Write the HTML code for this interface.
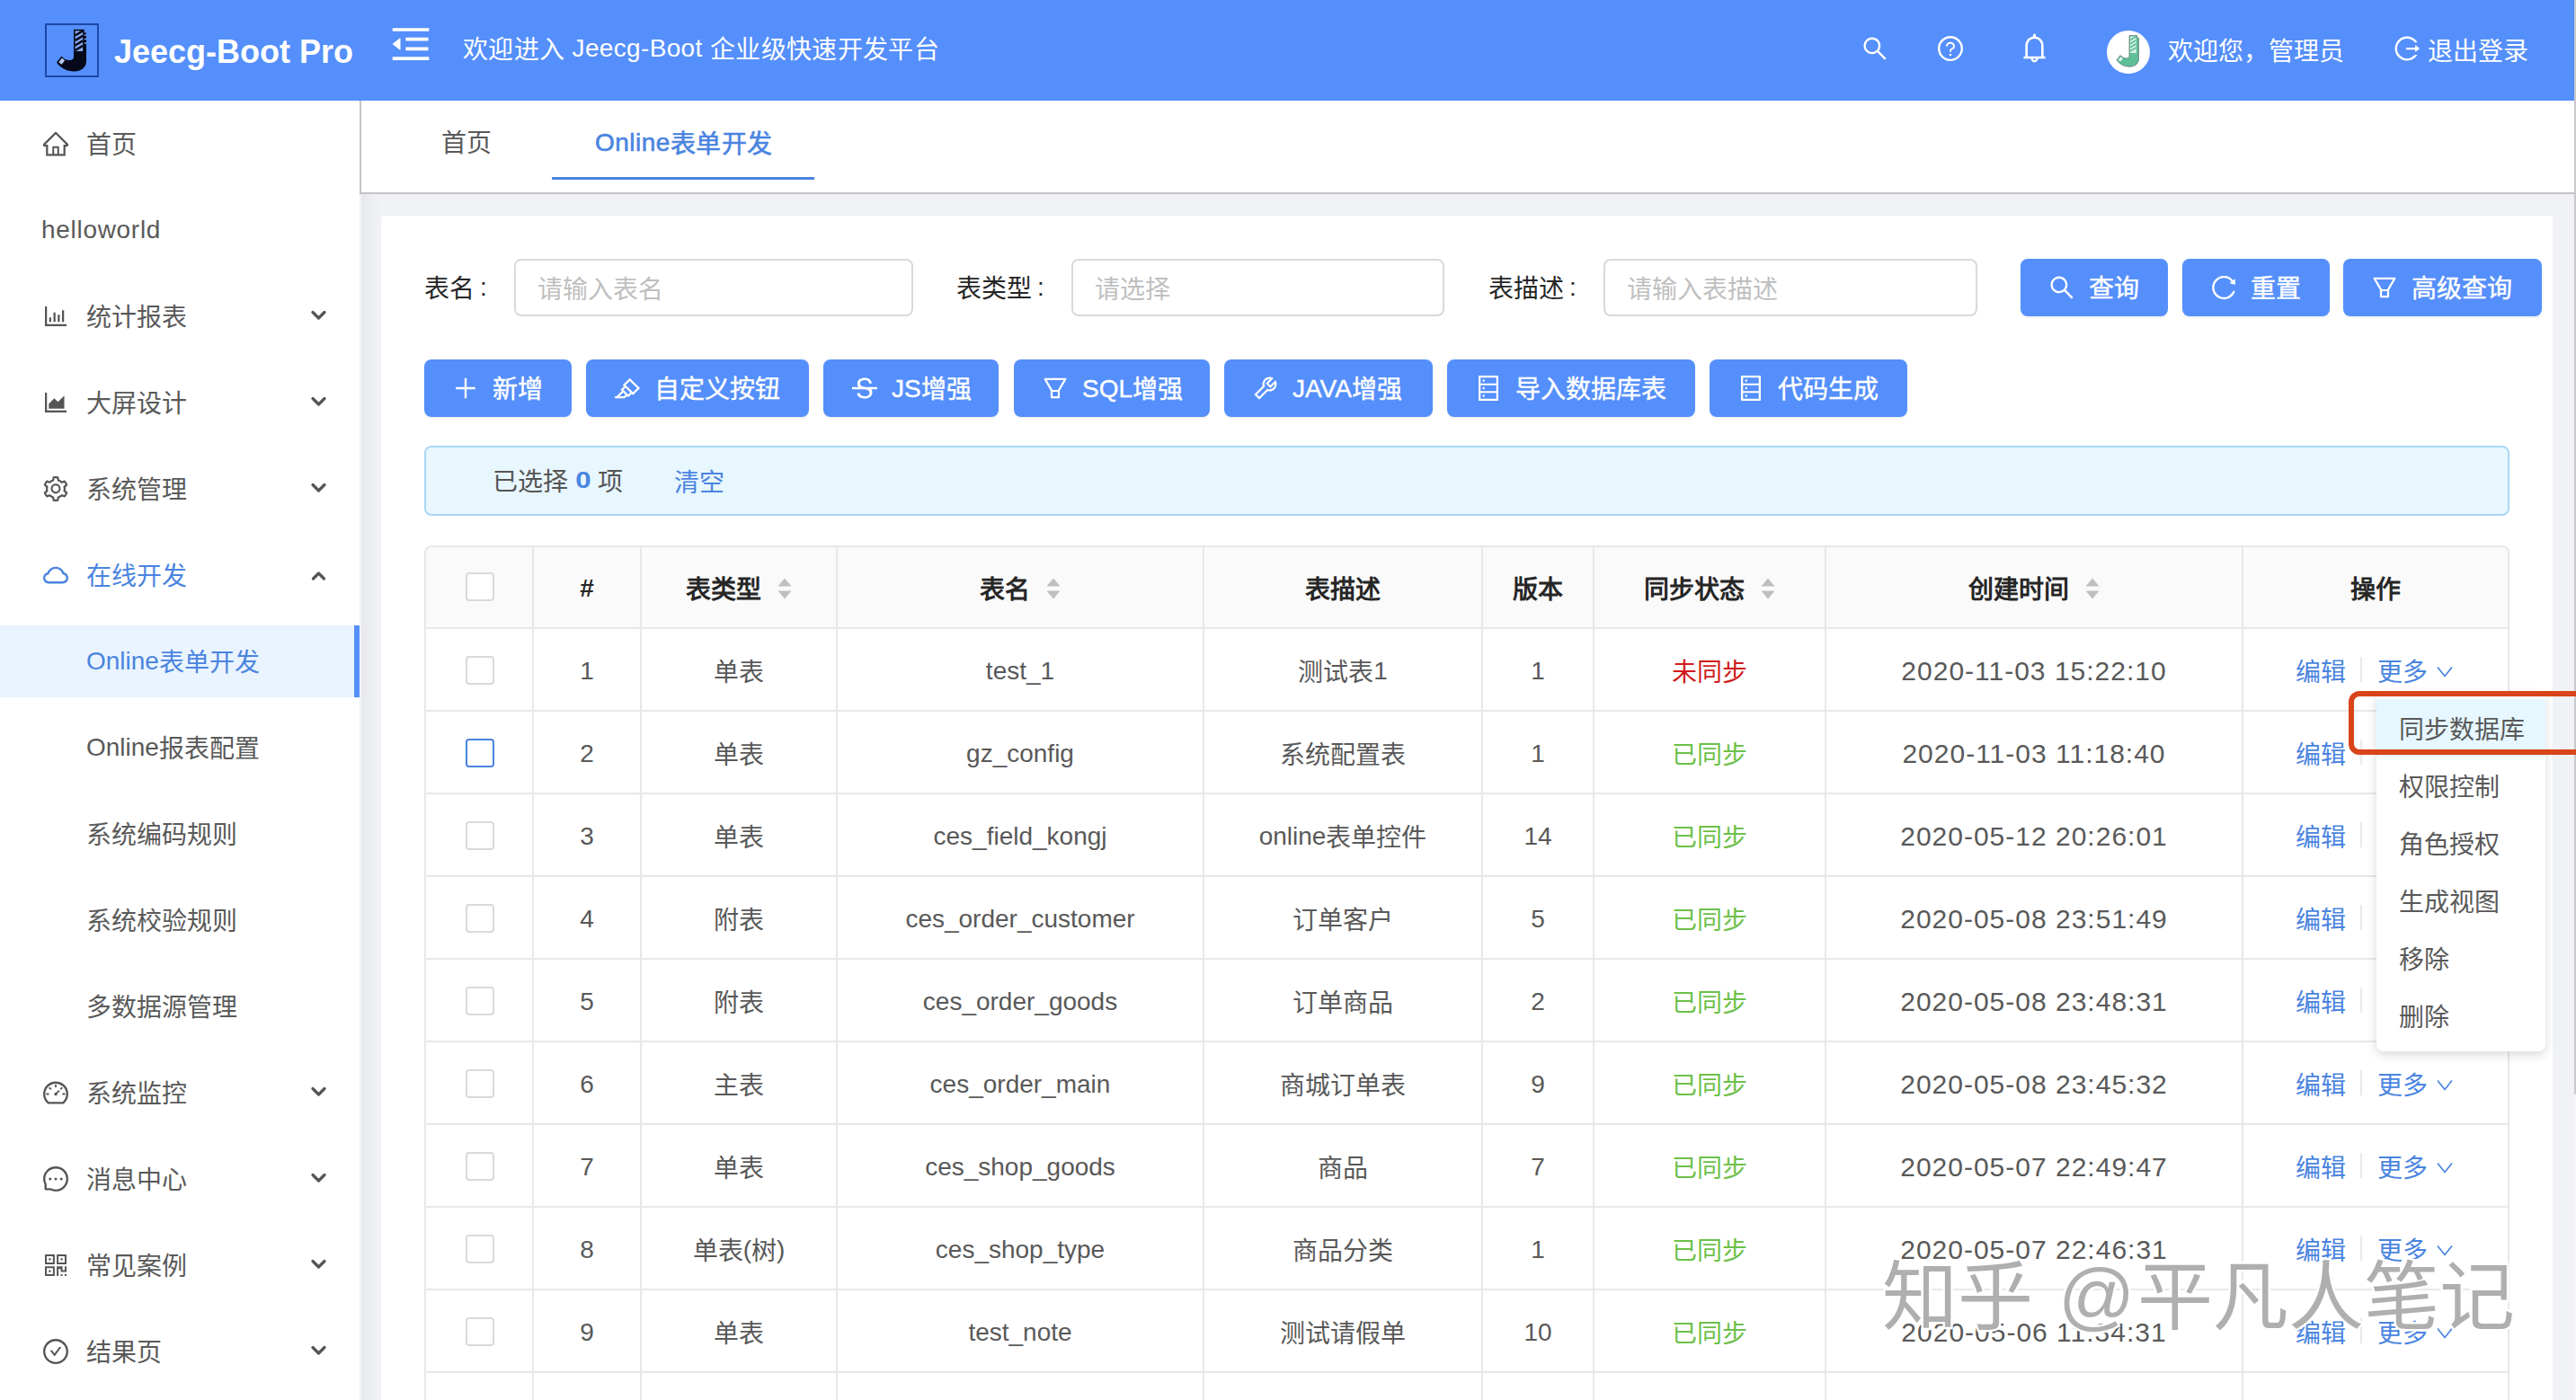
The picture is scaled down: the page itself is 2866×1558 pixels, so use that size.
<!DOCTYPE html>
<html lang="zh-CN"><head><meta charset="utf-8">
<style>
*{box-sizing:border-box;margin:0;padding:0}
html,body{width:2866px;height:1558px;overflow:hidden}
body{position:relative;background:#f0f2f5;font-family:"Liberation Sans",sans-serif;font-size:28px;color:#595959}
.a{position:absolute;white-space:nowrap}
.k{position:relative;top:1.5px}
#hdr{left:0;top:0;width:2864px;height:112px;background:#558ffb}
#rbar{left:2864px;top:0;width:2px;height:1218px;background:#c9c9c9;border-radius:0 0 1px 1px}
#rbar2{left:2864px;top:1220px;width:2px;height:338px;background:#f6f6f6}
#side{left:0;top:112px;width:400px;height:1446px;background:#fff}
.mt{left:96px;height:36px;line-height:36px}
.ch{left:345px}
#tabs{left:400px;top:112px;width:2464px;height:104px;background:#fff;border-left:2px solid #c4c4c4;border-bottom:2px solid #c4c4c4}
#card{left:424px;top:240px;width:2416px;height:1400px;background:#fff;border-radius:4px}
.lbl{color:#262626}
.inp{height:64px;border:2px solid #d9d9d9;border-radius:8px;background:#fff}
.inp>span{position:absolute;left:24px;top:1px;line-height:60px;color:#bfbfbf}
.btn{height:64px;background:#558ffb;border-radius:8px;color:#fff;line-height:64px;box-shadow:0 2px 2px rgba(0,0,0,.05)}
.btn>span{position:absolute;top:0.5px;-webkit-text-stroke:0.4px #fff}
.btn svg{position:absolute;left:30px;top:16px}
.vl{top:607px;width:2px;height:1000px;background:#e8e8e8}
.hl{left:472px;width:2320px;height:2px;background:#e8e8e8}
.c{height:36px;line-height:40px;text-align:center}
.th{color:#262626;font-weight:bold;line-height:39px}
.so{display:inline-block;vertical-align:middle;margin-left:18px;margin-top:-4px}
.cb{width:32px;height:32px;border:2px solid #d9d9d9;border-radius:4px;background:#fff}
.cb.hov{border-color:#4a84e0}
.dt{font-size:30px;letter-spacing:1px}
.lk{line-height:40px;color:#4a84e0}
.dv{width:2px;height:28px;background:#e8e8e8}
</style></head><body>
<div class="a" id="hdr"></div>
<div class="a" id="rbar"></div><div class="a" id="rbar2"></div>
<svg class="a" style="left:50px;top:26px" width="60" height="60" viewBox="0 0 60 60">
  <rect x="1" y="1" width="58" height="58" fill="none" stroke="#1d48a6" stroke-width="2"/>
  <path d="M32 6.75 H43.75 V10.5 H46 V42.5 C46 49 40 53.5 32.5 53.5 C24.5 53.5 17 49.5 13 43.5 L18.5 36.5 C21 39.5 24 41 27.5 41 C30.5 41 32 39.5 32 37 Z" fill="#05091a"/>
  <path d="M33.6 8.3 H42.2 V31 H33.6 Z" fill="#86aaf0"/>
  <path d="M33.6 13.5 L42.2 8.3 M33.6 19 L42.2 13.8 M33.6 24.5 L42.2 19.3 M33.6 30 L42.2 24.8" stroke="#05091a" stroke-width="2.6"/>
  <path d="M43.8 13 H46 M43.8 17.5 H46 M43.8 22 H46" stroke="#7ea6ec" stroke-width="1.4"/>
  <path d="M15.3 43.2 L19 38.6 L22.2 41.3 L18.5 45.8 Z" fill="#b6c9ee"/>
</svg>
<div class="a" style="left:127px;top:36px;font-size:36px;font-weight:bold;color:#fff;line-height:44px">Jeecg-Boot Pro</div>
<svg class="a" style="left:431px;top:23px" width="52" height="52" viewBox="0 0 1024 1024"><path fill="#fff" d="M408 442h480c4.4 0 8-3.6 8-8v-56c0-4.4-3.6-8-8-8H408c-4.4 0-8 3.6-8 8v56c0 4.4 3.6 8 8 8zm-8 204c0 4.4 3.6 8 8 8h480c4.4 0 8-3.6 8-8v-56c0-4.4-3.6-8-8-8H408c-4.4 0-8 3.6-8 8v56zm504-486H120c-4.4 0-8 3.6-8 8v56c0 4.4 3.6 8 8 8h784c4.4 0 8-3.6 8-8v-56c0-4.4-3.6-8-8-8zm0 632H120c-4.4 0-8 3.6-8 8v56c0 4.4 3.6 8 8 8h784c4.4 0 8-3.6 8-8v-56c0-4.4-3.6-8-8-8zM115.4 518.9L271.7 642c5.8 4.6 14.4.5 14.4-6.9V388.9c0-7.4-8.5-11.5-14.4-6.9L115.4 505.1a8.74 8.74 0 000 13.8z"/></svg>
<div class="a" style="left:515px;top:36px;font-size:28px;color:#fff;line-height:36px;letter-spacing:0.35px"><span class="k">欢迎进入</span> Jeecg-Boot <span class="k">企业级快速开发平台</span></div>
<svg class="a" style="left:2070px;top:38px" width="32" height="32" viewBox="0 0 1024 1024"><path fill="#fff" d="M909.6 854.5L649.9 594.8C690.2 542.7 712 479 712 412c0-80.2-31.3-155.4-87.9-212.1-56.6-56.7-132-87.9-212.1-87.9s-155.5 31.3-212.1 87.9C143.2 256.5 112 331.8 112 412c0 80.1 31.3 155.5 87.9 212.1C256.5 680.8 331.8 712 412 712c67 0 130.6-21.8 182.7-62l259.7 259.6a8.2 8.2 0 0011.6 0l43.6-43.5a8.2 8.2 0 000-11.6zM570.4 570.4C528 612.7 471.8 636 412 636s-116-23.3-158.4-65.6C211.3 528 188 471.8 188 412s23.3-116.1 65.6-158.4C296 211.3 352.2 188 412 188s116.1 23.2 158.4 65.6S636 352.2 636 412s-23.3 116.1-65.6 158.4z"/></svg>
<svg class="a" style="left:2154px;top:38px" width="32" height="32" viewBox="0 0 1024 1024"><path fill="#fff" d="M512 64C264.6 64 64 264.6 64 512s200.6 448 448 448 448-200.6 448-448S759.4 64 512 64zm0 820c-205.4 0-372-166.6-372-372s166.6-372 372-372 372 166.6 372 372-166.6 372-372 372z M623.6 316.7C593.6 290.4 554 276 512 276s-81.6 14.5-111.6 40.7C369.2 344 352 380.7 352 420v7.6c0 4.4 3.6 8 8 8h48c4.4 0 8-3.6 8-8V420c0-44.1 43.1-80 96-80s96 35.9 96 80c0 31.1-22 59.6-56.1 72.7-21.2 8.1-39.2 22.3-52.1 40.9-13.1 19-19.9 41.8-19.9 64.9V620c0 4.4 3.6 8 8 8h48c4.4 0 8-3.6 8-8v-22.7a48.3 48.3 0 0130.9-44.8c59-22.7 97.1-74.7 97.1-132.5.1-39.3-17.1-76-48.3-103.3zM472 732a40 40 0 1080 0 40 40 0 10-80 0z"/></svg>
<svg class="a" style="left:2245px;top:35px" width="37" height="37" viewBox="0 0 1024 1024"><path fill="#fff" d="M816 768h-24V428c0-141.1-104.3-257.7-240-277.1V112c0-22.1-17.9-40-40-40s-40 17.9-40 40v38.9c-135.7 19.4-240 136-240 277.1v340h-24c-17.7 0-32 14.3-32 32v32c0 4.4 3.6 8 8 8h216c0 61.8 50.2 112 112 112s112-50.2 112-112h216c4.4 0 8-3.6 8-8v-32c0-17.7-14.3-32-32-32zM512 888c-26.5 0-48-21.5-48-48h96c0 26.5-21.5 48-48 48zM304 768V428c0-55.6 21.6-107.8 60.9-147.1S456.4 220 512 220c55.6 0 107.8 21.6 147.1 60.9S720 372.4 720 428v340H304z"/></svg>
<div class="a" style="left:2344px;top:34px;width:48px;height:48px;border-radius:50%;background:#fff"></div>
<svg class="a" style="left:2344px;top:34px" width="48" height="48" viewBox="0 0 48 48"><g transform="translate(1.38 0.6) scale(0.74)">
  <path d="M32 6.75 H43.75 V10.5 H46 V42.5 C46 49 40 53.5 32.5 53.5 C24.5 53.5 17 49.5 13 43.5 L18.5 36.5 C21 39.5 24 41 27.5 41 C30.5 41 32 39.5 32 37 Z" fill="#5fbf98" stroke="#55706a" stroke-width="1"/>
  <path d="M33.2 8 H42.4 V33 H33.2 Z" fill="#d9f1e6"/>
  <path d="M33.6 13.5 L42.2 8.3 M33.6 19 L42.2 13.8 M33.6 24.5 L42.2 19.3 M33.6 30 L42.2 24.8" stroke="#5fbf98" stroke-width="2.4"/>
  <path d="M15.3 43.2 L19 38.6 L22.2 41.3 L18.5 45.8 Z" fill="#e6f5ee"/>
</g></svg>
<div class="a" style="left:2412px;top:38px;font-size:28px;color:#fff;line-height:36px"><span class="k">欢迎您，管理员</span></div>
<svg class="a" style="left:2662px;top:38px" width="32" height="32" viewBox="0 0 1024 1024"><path fill="#fff" d="M868 732h-70.3c-4.8 0-9.3 2.1-12.3 5.8-7 8.5-14.5 16.7-22.4 24.5a353.84 353.84 0 01-112.7 75.9A352.8 352.8 0 01512.4 866c-47.9 0-94.3-9.4-137.9-27.8a353.84 353.84 0 01-112.7-75.9 353.28 353.28 0 01-76-112.5C167.3 606.2 158 559.9 158 512s9.4-94.2 27.8-137.8c17.8-42.1 43.4-80 76-112.5s70.5-58.1 112.7-75.9c43.6-18.4 90-27.8 137.9-27.8 47.9 0 94.3 9.3 137.9 27.8 42.2 17.8 80.1 43.4 112.7 75.9 7.9 7.9 15.3 16.1 22.4 24.5 3 3.7 7.6 5.8 12.3 5.8H868c6.3 0 10.2-7 6.7-12.3C798 160.5 663.8 81.6 511.3 82 271.7 82.6 79.6 277.1 82 516.4 84.4 751.9 276.2 942 512.4 942c152.1 0 285.7-78.8 362.3-197.7 3.4-5.3-.4-12.3-6.7-12.3zm88.9-226.3L815 393.7c-5.3-4.2-13-.4-13 6.3v76H488c-4.4 0-8 3.6-8 8v56c0 4.4 3.6 8 8 8h314v76c0 6.7 7.8 10.5 13 6.3l141.9-112a8 8 0 000-12.6z"/></svg>
<div class="a" style="left:2701px;top:38px;font-size:28px;color:#fff;line-height:36px"><span class="k">退出登录</span></div>
<div class="a" id="side"></div>
<div class="a" style="left:0;top:696px;width:400px;height:80px;background:#e9f4fe"></div>
<div class="a" style="left:394px;top:696px;width:6px;height:80px;background:#558ffb"></div>
<svg class="a" style="left:46px;top:144px" width="32" height="32" viewBox="0 0 1024 1024"><path fill="#555" d="M946.5 505L560.1 118.8l-25.9-25.9a31.5 31.5 0 00-44.4 0L77.5 505a63.9 63.9 0 00-18.8 46c.4 35.2 29.7 63.3 64.9 63.3h42.5V940h691.8V614.3h43.4c17.1 0 33.2-6.7 45.3-18.8a63.6 63.6 0 0018.7-45.3c0-17-6.7-33.1-18.8-45.2zM568 868H456V664h112v204zm217.9-325.7V868H632V640c0-22.1-17.9-40-40-40H432c-22.1 0-40 17.9-40 40v228H238.1V542.3h-96l370-369.7 23.1 23.1L882 542.3h-96.1z"/></svg>
<div class="a mt" style="top:142px"><span class="k">首页</span></div>
<div class="a mt" style="left:46px;top:238px;letter-spacing:0.7px">helloworld</div>
<svg class="a" style="left:46px;top:336px" width="32" height="32" viewBox="0 0 1024 1024"><path fill="#555" d="M888 792H200V168c0-4.4-3.6-8-8-8h-56c-4.4 0-8 3.6-8 8v688c0 4.4 3.6 8 8 8h752c4.4 0 8-3.6 8-8v-56c0-4.4-3.6-8-8-8zm-600-80h56c4.4 0 8-3.6 8-8V560c0-4.4-3.6-8-8-8h-56c-4.4 0-8 3.6-8 8v144c0 4.4 3.6 8 8 8zm152 0h56c4.4 0 8-3.6 8-8V384c0-4.4-3.6-8-8-8h-56c-4.4 0-8 3.6-8 8v320c0 4.4 3.6 8 8 8zm152 0h56c4.4 0 8-3.6 8-8V462c0-4.4-3.6-8-8-8h-56c-4.4 0-8 3.6-8 8v242c0 4.4 3.6 8 8 8zm152 0h56c4.4 0 8-3.6 8-8V304c0-4.4-3.6-8-8-8h-56c-4.4 0-8 3.6-8 8v400c0 4.4 3.6 8 8 8z"/></svg>
<div class="a mt" style="top:334px"><span class="k">统计报表</span></div>
<svg class="a ch" style="top:343px" width="20" height="16" viewBox="0 0 20 16"><path d="M3 4.5 L9.5 11 L16 4.5" fill="none" stroke="#555" stroke-width="3.3" stroke-linecap="round" stroke-linejoin="round"/></svg>
<svg class="a" style="left:46px;top:432px" width="32" height="32" viewBox="0 0 1024 1024"><path fill="#555" d="M888 792H200V168c0-4.4-3.6-8-8-8h-56c-4.4 0-8 3.6-8 8v688c0 4.4 3.6 8 8 8h752c4.4 0 8-3.6 8-8v-56c0-4.4-3.6-8-8-8zm-616-64h536c4.4 0 8-3.6 8-8V284c0-7.2-8.7-10.7-13.7-5.7L592 488.6l-125.4-124a8.03 8.03 0 00-11.3.1L267.7 555.1c-1.5 1.5-2.3 3.5-2.3 5.6V720c0 4.4 3.6 8 8 8z"/></svg>
<div class="a mt" style="top:430px"><span class="k">大屏设计</span></div>
<svg class="a ch" style="top:439px" width="20" height="16" viewBox="0 0 20 16"><path d="M3 4.5 L9.5 11 L16 4.5" fill="none" stroke="#555" stroke-width="3.3" stroke-linecap="round" stroke-linejoin="round"/></svg>
<svg class="a" style="left:46px;top:528px" width="32" height="32" viewBox="0 0 1024 1024"><path fill="#555" d="M924.8 625.7l-65.5-56c3.1-19 4.7-38.4 4.7-57.8s-1.6-38.8-4.7-57.8l65.5-56a32.03 32.03 0 009.3-35.2l-.9-2.6a443.74 443.74 0 00-79.7-137.9l-1.8-2.1a32.12 32.12 0 00-35.1-9.5l-81.3 28.9c-30-24.6-63.5-44-99.7-57.6l-15.7-85a32.05 32.05 0 00-25.8-25.7l-2.7-.5c-52.1-9.4-106.9-9.4-159 0l-2.7.5a32.05 32.05 0 00-25.8 25.7l-15.8 85.4a351.86 351.86 0 00-99 57.4l-81.9-29.1a32 32 0 00-35.1 9.5l-1.8 2.1a446.02 446.02 0 00-79.7 137.9l-.9 2.6c-4.5 12.5-.8 26.5 9.3 35.2l66.3 56.6c-3.1 18.8-4.6 38-4.6 57.1 0 19.2 1.5 38.4 4.6 57.1L99 625.5a32.03 32.03 0 00-9.3 35.2l.9 2.6c18.1 50.4 44.9 96.9 79.7 137.9l1.8 2.1a32.12 32.12 0 0035.1 9.5l81.9-29.1c29.8 24.5 63.1 43.9 99 57.4l15.8 85.4a32.05 32.05 0 0025.8 25.7l2.7.5a449.4 449.4 0 00159 0l2.7-.5a32.05 32.05 0 0025.8-25.7l15.7-85a350 350 0 0099.7-57.6l81.3 28.9a32 32 0 0035.1-9.5l1.8-2.1c34.8-41.1 61.6-87.5 79.7-137.9l.9-2.6c4.5-12.3.8-26.3-9.3-35zM788.3 465.9c2.5 15.1 3.8 30.6 3.8 46.1s-1.3 31-3.8 46.1l-6.6 40.1 74.7 63.9a370.03 370.03 0 01-42.6 73.6L721 702.8l-31.4 25.8c-23.9 19.6-50.5 35-79.3 45.8l-38.1 14.3-17.9 97a377.5 377.5 0 01-85 0l-17.9-97.2-37.8-14.5c-28.5-10.8-55-26.2-78.7-45.7l-31.4-25.9-93.4 33.2c-17-22.9-31.2-47.6-42.6-73.6l75.5-64.5-6.5-40c-2.4-14.9-3.7-30.3-3.7-45.5 0-15.3 1.2-30.6 3.7-45.5l6.5-40-75.5-64.5c11.3-26.1 25.6-50.7 42.6-73.6l93.4 33.2 31.4-25.9c23.7-19.5 50.2-34.9 78.7-45.7l37.9-14.3 17.9-97.2c28.1-3.2 56.8-3.2 85 0l17.9 97 38.1 14.3c28.7 10.8 55.4 26.2 79.3 45.8l31.4 25.8 92.8-32.9c17 22.9 31.2 47.6 42.6 73.6L781.8 426l6.5 39.9zM512 326c-97.2 0-176 78.8-176 176s78.8 176 176 176 176-78.8 176-176-78.8-176-176-176zm79.2 255.2A111.6 111.6 0 01512 614c-29.9 0-58-11.7-79.2-32.8A111.6 111.6 0 01400 502c0-29.9 11.7-58 32.8-79.2C454 401.6 482.1 390 512 390c29.9 0 58 11.6 79.2 32.8A111.6 111.6 0 01624 502c0 29.9-11.7 58-32.8 79.2z"/></svg>
<div class="a mt" style="top:526px"><span class="k">系统管理</span></div>
<svg class="a ch" style="top:535px" width="20" height="16" viewBox="0 0 20 16"><path d="M3 4.5 L9.5 11 L16 4.5" fill="none" stroke="#555" stroke-width="3.3" stroke-linecap="round" stroke-linejoin="round"/></svg>
<svg class="a" style="left:46px;top:624px" width="32" height="32" viewBox="0 0 1024 1024"><path fill="#4a84e0" d="M811.4 418.7C765.6 297.9 648.9 212 512.2 212S258.8 297.8 213 418.6C127.3 441.1 64 519.1 64 612c0 110.5 89.5 200 199.9 200h496.2C870.5 812 960 722.5 960 612c0-92.7-63.1-170.7-148.6-193.3zm36.3 281a123.07 123.07 0 01-87.6 36.3H263.9c-33.1 0-64.2-12.9-87.6-36.3A123.3 123.3 0 01140 612c0-28 9.1-54.3 26.2-76.3a125.7 125.7 0 0166.1-43.7l37.9-9.9 13.9-36.6c8.6-22.8 20.6-44.1 35.7-63.4a245.6 245.6 0 0152.4-49.9c41.1-28.9 89.5-44.2 140-44.2s98.9 15.3 140 44.2c19.9 14 37.5 30.8 52.4 49.9 15.1 19.3 27.1 40.6 35.7 63.4l13.8 36.5 37.8 10c54.3 14.5 92.1 63.8 92.1 120 0 33.1-12.9 64.3-36.3 87.7z"/></svg>
<div class="a mt" style="top:622px;color:#4a84e0"><span class="k">在线开发</span></div>
<svg class="a ch" style="top:631px" width="20" height="16" viewBox="0 0 20 16"><path d="M3.5 13 L9.5 7 L15.5 13" fill="none" stroke="#555" stroke-width="3.3" stroke-linecap="round" stroke-linejoin="round"/></svg>
<div class="a mt" style="top:718px;color:#4a84e0">Online<span class="k">表单开发</span></div>
<div class="a mt" style="top:814px">Online<span class="k">报表配置</span></div>
<div class="a mt" style="top:910px"><span class="k">系统编码规则</span></div>
<div class="a mt" style="top:1006px"><span class="k">系统校验规则</span></div>
<div class="a mt" style="top:1102px"><span class="k">多数据源管理</span></div>
<svg class="a" style="left:46px;top:1200px" width="32" height="32" viewBox="0 0 1024 1024"><path fill="#555" d="M924.8 385.6a446.7 446.7 0 00-96-142.4 446.7 446.7 0 00-142.4-96C631.1 123.8 572.5 112 512 112s-119.1 11.8-174.4 35.2a446.7 446.7 0 00-142.4 96 446.7 446.7 0 00-96 142.4C75.8 440.9 64 499.5 64 560c0 132.7 58.3 257.7 159.9 343.1l1.7 1.4c5.8 4.8 13.1 7.5 20.6 7.5h531.7c7.5 0 14.8-2.7 20.6-7.5l1.7-1.4C901.7 817.7 960 692.7 960 560c0-60.5-11.9-119.1-35.2-174.4zM761.4 836H262.6A371.12 371.12 0 01140 560c0-99.4 38.7-192.8 109-263 70.3-70.3 163.7-109 263-109 99.4 0 192.8 38.7 263 109 70.3 70.3 109 163.7 109 263 0 105.6-44.5 205.5-122.6 276zM623.5 421.5a8.03 8.03 0 00-11.3 0L527.7 506c-18.7-5-39.4-.2-54.1 14.5a55.95 55.95 0 000 79.2 55.95 55.95 0 0079.2 0 55.87 55.87 0 0014.5-54.1l84.5-84.5c3.1-3.1 3.1-8.2 0-11.3l-28.3-28.3zM490 320h44c4.4 0 8-3.6 8-8v-80c0-4.4-3.6-8-8-8h-44c-4.4 0-8 3.6-8 8v80c0 4.4 3.6 8 8 8zm260 218v44c0 4.4 3.6 8 8 8h80c4.4 0 8-3.6 8-8v-44c0-4.4-3.6-8-8-8h-80c-4.4 0-8 3.6-8 8zm12.7-197.2l-31.1-31.1a8.03 8.03 0 00-11.3 0l-56.6 56.6a8.03 8.03 0 000 11.3l31.1 31.1c3.1 3.1 8.2 3.1 11.3 0l56.6-56.6c3.1-3.1 3.1-8.2 0-11.3zm-458.6-31.1a8.03 8.03 0 00-11.3 0l-31.1 31.1a8.03 8.03 0 000 11.3l56.6 56.6c3.1 3.1 8.2 3.1 11.3 0l31.1-31.1c3.1-3.1 3.1-8.2 0-11.3l-56.6-56.6zM262 530h-80c-4.4 0-8 3.6-8 8v44c0 4.4 3.6 8 8 8h80c4.4 0 8-3.6 8-8v-44c0-4.4-3.6-8-8-8z"/></svg>
<div class="a mt" style="top:1198px"><span class="k">系统监控</span></div>
<svg class="a ch" style="top:1207px" width="20" height="16" viewBox="0 0 20 16"><path d="M3 4.5 L9.5 11 L16 4.5" fill="none" stroke="#555" stroke-width="3.3" stroke-linecap="round" stroke-linejoin="round"/></svg>
<svg class="a" style="left:46px;top:1296px" width="32" height="32" viewBox="0 0 1024 1024"><path fill="#555" d="M464 512a48 48 0 1096 0 48 48 0 10-96 0zm200 0a48 48 0 1096 0 48 48 0 10-96 0zm-400 0a48 48 0 1096 0 48 48 0 10-96 0zm661.2-173.6c-22.6-53.7-55-101.9-96.3-143.3a444.35 444.35 0 00-143.3-96.3C630.6 75.7 572.2 64 512 64h-2c-60.6.3-119.3 12.3-174.5 35.9a445.35 445.35 0 00-142 96.5c-40.9 41.3-73 89.3-95.2 142.8-23 55.4-34.6 114.3-34.3 174.9A449.4 449.4 0 00112 714v152a46 46 0 0046 46h152.1A449.4 449.4 0 00510 960h2.1c59.9 0 118-11.6 172.7-34.3a444.48 444.48 0 00142.8-95.2c41.3-40.9 73.8-88.7 96.5-142 23.6-55.2 35.6-113.9 35.9-174.5.3-60.9-11.5-120-34.8-175.6zm-151.1 438C704 845.8 611 884 512 884h-1.7c-60.3-.3-120.2-15.3-173.1-43.5l-8.4-4.5H188V695.2l-4.5-8.4C155.3 633.9 140.3 574 140 513.7c-.4-99.7 37.7-193.3 107.6-263.8 69.8-70.5 163.1-109.5 262.8-109.9h1.7c50 0 98.5 9.7 144.2 28.9 44.6 18.7 84.6 45.6 119 80 34.3 34.3 61.3 74.4 80 119 19.4 46.2 29.1 95.2 28.9 145.8-.6 99.6-39.7 192.9-110.1 262.7z"/></svg>
<div class="a mt" style="top:1294px"><span class="k">消息中心</span></div>
<svg class="a ch" style="top:1303px" width="20" height="16" viewBox="0 0 20 16"><path d="M3 4.5 L9.5 11 L16 4.5" fill="none" stroke="#555" stroke-width="3.3" stroke-linecap="round" stroke-linejoin="round"/></svg>
<svg class="a" style="left:46px;top:1392px" width="32" height="32" viewBox="0 0 1024 1024"><path fill="#555" d="M468 128H160c-17.7 0-32 14.3-32 32v308c0 4.4 3.6 8 8 8h332c4.4 0 8-3.6 8-8V136c0-4.4-3.6-8-8-8zm-56 284H192V192h220v220zm-138-74h56c4.4 0 8-3.6 8-8v-56c0-4.4-3.6-8-8-8h-56c-4.4 0-8 3.6-8 8v56c0 4.4 3.6 8 8 8zm194 210H136c-4.4 0-8 3.6-8 8v308c0 17.7 14.3 32 32 32h308c4.4 0 8-3.6 8-8V556c0-4.4-3.6-8-8-8zm-56 284H192V612h220v220zm-138-74h56c4.4 0 8-3.6 8-8v-56c0-4.4-3.6-8-8-8h-56c-4.4 0-8 3.6-8 8v56c0 4.4 3.6 8 8 8zm590-630H556c-4.4 0-8 3.6-8 8v332c0 4.4 3.6 8 8 8h332c4.4 0 8-3.6 8-8V160c0-17.7-14.3-32-32-32zm-32 284H612V192h220v220zm-138-74h56c4.4 0 8-3.6 8-8v-56c0-4.4-3.6-8-8-8h-56c-4.4 0-8 3.6-8 8v56c0 4.4 3.6 8 8 8zm194 210h-48c-4.4 0-8 3.6-8 8v134h-78V556c0-4.4-3.6-8-8-8H556c-4.4 0-8 3.6-8 8v332c0 4.4 3.6 8 8 8h48c4.4 0 8-3.6 8-8V644h78v102c0 4.4 3.6 8 8 8h190c4.4 0 8-3.6 8-8V556c0-4.4-3.6-8-8-8zM746 832h-48c-4.4 0-8 3.6-8 8v48c0 4.4 3.6 8 8 8h48c4.4 0 8-3.6 8-8v-48c0-4.4-3.6-8-8-8zm142 0h-48c-4.4 0-8 3.6-8 8v48c0 4.4 3.6 8 8 8h48c4.4 0 8-3.6 8-8v-48c0-4.4-3.6-8-8-8z"/></svg>
<div class="a mt" style="top:1390px"><span class="k">常见案例</span></div>
<svg class="a ch" style="top:1399px" width="20" height="16" viewBox="0 0 20 16"><path d="M3 4.5 L9.5 11 L16 4.5" fill="none" stroke="#555" stroke-width="3.3" stroke-linecap="round" stroke-linejoin="round"/></svg>
<svg class="a" style="left:46px;top:1488px" width="32" height="32" viewBox="0 0 1024 1024"><path fill="#555" d="M699 353h-46.9c-10.2 0-19.9 4.9-25.9 13.3L469 584.3l-71.2-98.8c-6-8.3-15.6-13.3-25.9-13.3H325c-6.5 0-10.3 7.4-6.5 12.7l124.6 172.8a31.8 31.8 0 0051.7 0l210.6-292c3.9-5.3.1-12.7-6.4-12.7z M512 64C264.6 64 64 264.6 64 512s200.6 448 448 448 448-200.6 448-448S759.4 64 512 64zm0 820c-205.4 0-372-166.6-372-372s166.6-372 372-372 372 166.6 372 372-166.6 372-372 372z"/></svg>
<div class="a mt" style="top:1486px"><span class="k">结果页</span></div>
<svg class="a ch" style="top:1495px" width="20" height="16" viewBox="0 0 20 16"><path d="M3 4.5 L9.5 11 L16 4.5" fill="none" stroke="#555" stroke-width="3.3" stroke-linecap="round" stroke-linejoin="round"/></svg>
<div class="a" id="tabs"></div>
<div class="a" style="left:402px;top:216px;width:22px;height:1342px;background:linear-gradient(to right,#e8e9ee,#f1f2f6)"></div>
<div class="a" id="card"></div>
<div class="a" style="left:491px;top:140px;line-height:36px"><span class="k">首页</span></div>
<div class="a" style="left:662px;top:141px;line-height:36px;color:#4a84e0;-webkit-text-stroke:0.6px #4a84e0;letter-spacing:0.5px">Online<span class="k">表单开发</span></div>
<div class="a" style="left:614px;top:197px;width:292px;height:3px;background:#4a84e0"></div>
<div class="a lbl" style="left:472px;top:302px;line-height:36px"><span class="k">表名</span><span style="margin-left:6px">:</span></div>
<div class="a lbl" style="left:1064px;top:302px;line-height:36px"><span class="k">表类型</span><span style="margin-left:6px">:</span></div>
<div class="a lbl" style="left:1656px;top:302px;line-height:36px"><span class="k">表描述</span><span style="margin-left:6px">:</span></div>
<div class="a inp" style="left:572px;top:288px;width:444px"><span><span class="k">请输入表名</span></span></div>
<div class="a inp" style="left:1192px;top:288px;width:415px"><span><span class="k">请选择</span></span></div>
<div class="a inp" style="left:1784px;top:288px;width:416px"><span><span class="k">请输入表描述</span></span></div>
<div class="a btn" style="left:2248px;top:288px;width:164px"><svg width="32" height="32" viewBox="0 0 1024 1024"><path fill="#fff" d="M909.6 854.5L649.9 594.8C690.2 542.7 712 479 712 412c0-80.2-31.3-155.4-87.9-212.1-56.6-56.7-132-87.9-212.1-87.9s-155.5 31.3-212.1 87.9C143.2 256.5 112 331.8 112 412c0 80.1 31.3 155.5 87.9 212.1C256.5 680.8 331.8 712 412 712c67 0 130.6-21.8 182.7-62l259.7 259.6a8.2 8.2 0 0011.6 0l43.6-43.5a8.2 8.2 0 000-11.6zM570.4 570.4C528 612.7 471.8 636 412 636s-116-23.3-158.4-65.6C211.3 528 188 471.8 188 412s23.3-116.1 65.6-158.4C296 211.3 352.2 188 412 188s116.1 23.2 158.4 65.6S636 352.2 636 412s-23.3 116.1-65.6 158.4z"/></svg><span style="left:76px"><span class="k">查询</span></span></div>
<div class="a btn" style="left:2428px;top:288px;width:164px"><svg width="32" height="32" viewBox="0 0 1024 1024"><path fill="#fff" d="M909.1 209.3l-56.4 44.1C775.8 155.1 656.2 92 521.9 92 290 92 102.3 279.5 102 511.5 101.7 743.7 289.8 932 521.9 932c181.3 0 335.8-115 394.6-276.1 1.5-4.2-.7-8.9-4.9-10.3l-56.7-19.5a8 8 0 00-10.1 4.8c-1.8 5-3.8 10-5.9 14.9-17.3 41-42.1 77.8-73.7 109.4A344.77 344.77 0 01655.9 829c-42.3 17.9-87.4 27-133.8 27-46.5 0-91.5-9.1-133.8-27A341.5 341.5 0 01279 755.2a342.16 342.16 0 01-73.7-109.4c-17.9-42.4-27-87.4-27-133.9s9.1-91.5 27-133.9c17.3-41 42.1-77.8 73.7-109.4 31.6-31.6 68.4-56.4 109.3-73.8 42.3-17.9 87.4-27 133.8-27 46.5 0 91.5 9.1 133.8 27a341.5 341.5 0 01109.3 73.8c9.9 9.9 19.2 20.4 27.8 31.4l-60.2 47a8 8 0 003 14.1l175.6 43c5 1.2 9.9-2.6 9.9-7.7l.8-180.9c-.1-6.6-7.8-10.3-13-6.2z"/></svg><span style="left:76px"><span class="k">重置</span></span></div>
<div class="a btn" style="left:2607px;top:288px;width:221px"><svg width="32" height="32" viewBox="0 0 1024 1024"><path fill="#fff" d="M880.1 154H143.9c-24.5 0-39.8 26.7-27.5 48L349 597.4V838c0 17.7 14.2 32 31.8 32h262.4c17.6 0 31.8-14.3 31.8-32V597.4L907.7 202c12.2-21.3-3.1-48-27.6-48zM603.4 798H420.6V642h182.9v156zm9.6-236.6l-9.5 16.6h-183l-9.5-16.6L212.7 226h598.6L613 561.4z"/></svg><span style="left:76px"><span class="k">高级查询</span></span></div>
<div class="a btn" style="left:472px;top:400px;width:164px"><svg width="32" height="32" viewBox="0 0 1024 1024"><path fill="#fff" d="M482 152h60q8 0 8 8v704q0 8-8 8h-60q-8 0-8-8V160q0-8 8-8z M176 474h672q8 0 8 8v60q0 8-8 8H176q-8 0-8-8v-60q0-8 8-8z"/></svg><span style="left:76px"><span class="k">新增</span></span></div>
<div class="a btn" style="left:652px;top:400px;width:248px"><svg width="32" height="32" viewBox="0 0 1024 1024"><path fill="#fff" d="M957.6 507.4L603.2 158.2a7.9 7.9 0 00-11.2 0L353.3 393.4a8.03 8.03 0 00-.1 11.3l.1.1 40 39.4-117.2 115.3a8.03 8.03 0 00-.1 11.3l.1.1 39.5 38.9-189.1 187H72.1c-4.4 0-8.1 3.6-8.1 8V860c0 4.4 3.6 8 8 8h344.9c2.1 0 4.1-.8 5.6-2.3l76.1-75.6 40.4 39.8a7.9 7.9 0 0011.2 0l117.1-115.6 40.1 39.5a7.9 7.9 0 0011.2 0l238.7-235.2c3.4-3 3.4-8 .3-11.2zM389.8 796.2H229.6l134.4-133 80.1 78.9-54.3 54.1zm154.8-62.1L373.2 565.2l68.6-67.6 171.4 168.9-68.6 67.6zM713.1 658L450.3 399.1 597.6 254l262.8 259-147.3 145z"/></svg><span style="left:76px"><span class="k">自定义按钮</span></span></div>
<div class="a btn" style="left:916px;top:400px;width:195px"><svg width="32" height="32" viewBox="0 0 1024 1024"><path fill="#fff" d="M952 474H569.9c-10-2-20.5-4-31.6-6-15.9-2.9-22.2-4.1-30.8-5.8-51.3-10-82.2-20-106.8-34.2-35.1-20.5-52.2-48.3-52.2-85.1 0-37 15.2-67.7 44-89 28.4-21 68.8-32.1 116.8-32.1 54.8 0 97.1 14.4 125.8 42.8 14.6 14.4 25.3 32.1 31.8 52.6 1.3 4.1 2.8 10 4.3 17.8.9 4.8 5.2 8.2 9.9 8.2h72.8c5.6 0 10.1-4.6 10.1-10.1v-1c-.7-6.8-1.3-12.1-2-16-7.3-43.5-28-81.7-59.7-110.3-44.4-40.5-109.7-61.8-188.8-61.8-72.3 0-137.4 18.1-183.3 50.9-25.6 18.4-45.4 41.2-58.6 67.7-13.5 27.1-20.3 58.4-20.3 92.9 0 29.5 5.7 54.5 17.3 76.5 8.3 15.7 19.6 29.5 34.1 42H72c-4.4 0-8 3.6-8 8v60c0 4.4 3.6 8 8 8h433.2c2.1.4 3.9.8 5.9 1.2 30.9 6.2 49.5 10.4 66.6 15.2 23 6.5 40.6 13.3 55.2 21.5 35.8 20.2 53.3 49.2 53.3 89 0 35.3-15.5 66.8-43.6 88.8-30.5 23.9-75.6 36.4-130.5 36.4-43.7 0-80.7-8.5-110.2-25-29.1-16.3-49.1-39.8-59.7-69.5-.8-2.2-1.7-5.2-2.7-9-1.2-4.4-5.3-7.5-9.7-7.5h-79.7c-5.6 0-10.1 4.6-10.1 10.1v1c.2 2.3.4 4.2.6 5.7 6.5 48.8 30.3 88.8 70.7 118.8 47.1 34.8 113.4 53.2 191.8 53.2 84.2 0 154.8-19.8 204.2-57.3 25-18.9 44.2-42.2 57.1-69 13-27.1 19.7-57.9 19.7-91.5 0-31.8-6.2-58.6-19-82.2-5.7-10.5-12.6-19.9-20.7-28.3H952c4.4 0 8-3.6 8-8v-60c0-4.4-3.6-8-8-8z"/></svg><span style="left:76px">JS<span class="k">增强</span></span></div>
<div class="a btn" style="left:1128px;top:400px;width:218px"><svg width="32" height="32" viewBox="0 0 1024 1024"><path fill="#fff" d="M880.1 154H143.9c-24.5 0-39.8 26.7-27.5 48L349 597.4V838c0 17.7 14.2 32 31.8 32h262.4c17.6 0 31.8-14.3 31.8-32V597.4L907.7 202c12.2-21.3-3.1-48-27.6-48zM603.4 798H420.6V642h182.9v156zm9.6-236.6l-9.5 16.6h-183l-9.5-16.6L212.7 226h598.6L613 561.4z"/></svg><span style="left:76px">SQL<span class="k">增强</span></span></div>
<div class="a btn" style="left:1362px;top:400px;width:232px"><svg width="32" height="32" viewBox="0 0 1024 1024"><path fill="#fff" d="M876.6 239.5c-.5-.9-1.2-1.8-2-2.5-5-5-13.1-5-18.1 0L684.2 409.3l-67.9-67.9L788.7 169c.8-.8 1.4-1.6 2-2.5 3.6-6.1 1.6-13.9-4.5-17.5-98.2-58-226.8-44.7-311.3 39.7-67 67-89.2 162-66.5 247.4l-293 293c-3 3-2.8 7.9.3 11l169.7 169.7c3.1 3.1 8.1 3.3 11 .3l292.9-292.9c85.5 22.8 180.5.7 247.6-66.4 84.4-84.5 97.7-213.1 39.7-311.3zM786 499.8c-58.1 58.1-145.3 69.3-214.6 33.6l-8.8 8.8-.1-.1-274 274.1-79.2-79.2 230.1-230.1s0 .1.1.1l52.8-52.8c-35.7-69.3-24.5-156.5 33.6-214.6a184.2 184.2 0 01144-53.5L537 318.9a32.05 32.05 0 000 45.3l124.5 124.5a32.05 32.05 0 0045.3 0l132.8-132.8c3.7 51.8-14.4 104.8-53.6 143.9z"/></svg><span style="left:76px">JAVA<span class="k">增强</span></span></div>
<div class="a btn" style="left:1610px;top:400px;width:276px"><svg width="32" height="32" viewBox="0 0 1024 1024"><path fill="#fff" d="M832 64H192c-17.7 0-32 14.3-32 32v832c0 17.7 14.3 32 32 32h640c17.7 0 32-14.3 32-32V96c0-17.7-14.3-32-32-32zm-600 72h560v208H232V136zm560 480H232V408h560v208zm0 272H232V680h560v208zM304 240a40 40 0 1080 0 40 40 0 10-80 0zm0 272a40 40 0 1080 0 40 40 0 10-80 0zm0 272a40 40 0 1080 0 40 40 0 10-80 0z"/></svg><span style="left:76px"><span class="k">导入数据库表</span></span></div>
<div class="a btn" style="left:1902px;top:400px;width:220px"><svg width="32" height="32" viewBox="0 0 1024 1024"><path fill="#fff" d="M832 64H192c-17.7 0-32 14.3-32 32v832c0 17.7 14.3 32 32 32h640c17.7 0 32-14.3 32-32V96c0-17.7-14.3-32-32-32zm-600 72h560v208H232V136zm560 480H232V408h560v208zm0 272H232V680h560v208zM304 240a40 40 0 1080 0 40 40 0 10-80 0zm0 272a40 40 0 1080 0 40 40 0 10-80 0zm0 272a40 40 0 1080 0 40 40 0 10-80 0z"/></svg><span style="left:76px"><span class="k">代码生成</span></span></div>
<div class="a" style="left:472px;top:496px;width:2320px;height:78px;background:#e8f6fe;border:2px solid #a8d8f5;border-radius:8px"></div>
<div class="a" style="left:548px;top:517px;line-height:36px;color:#555"><span class="k">已选择</span> <b style="display:inline-block;color:#4a84e0;font-weight:bold;font-size:25px;transform:scaleX(1.25) translateY(-1px);margin-left:2px">0</b><span style="margin-left:9.5px"><span class="k">项</span></span></div>
<div class="a" style="left:750px;top:518px;line-height:36px;color:#4a84e0"><span class="k">清空</span></div>
<!-- table -->
<div class="a" style="left:472px;top:607px;width:2320px;height:92px;background:#fafafa;border-radius:8px 8px 0 0"></div>
<div class="a" style="left:472px;top:607px;width:2320px;height:1000px;border:2px solid #e8e8e8;border-radius:8px 8px 0 0"></div>
<div class="a vl" style="left:592px"></div>
<div class="a vl" style="left:712px"></div>
<div class="a vl" style="left:930px"></div>
<div class="a vl" style="left:1338px"></div>
<div class="a vl" style="left:1648px"></div>
<div class="a vl" style="left:1772px"></div>
<div class="a vl" style="left:2030px"></div>
<div class="a vl" style="left:2494px"></div>
<div class="a hl" style="top:698px"></div>
<div class="a hl" style="top:790px"></div>
<div class="a hl" style="top:882px"></div>
<div class="a hl" style="top:974px"></div>
<div class="a hl" style="top:1066px"></div>
<div class="a hl" style="top:1158px"></div>
<div class="a hl" style="top:1250px"></div>
<div class="a hl" style="top:1342px"></div>
<div class="a hl" style="top:1434px"></div>
<div class="a hl" style="top:1526px"></div>
<div class="a cb" style="left:518px;top:637px"></div>
<div class="a c th" style="left:592px;top:635px;width:122px">#</div>
<div class="a c th" style="left:712px;top:635px;width:220px"><span class="k">表类型</span><svg class="so" width="16" height="24" viewBox="0 0 16 24"><path d="M8 0.5 L15.5 9.5 H0.5 Z M8 23.5 L15.5 14.5 H0.5 Z" fill="#bfbfbf"/></svg></div>
<div class="a c th" style="left:930px;top:635px;width:410px"><span class="k">表名</span><svg class="so" width="16" height="24" viewBox="0 0 16 24"><path d="M8 0.5 L15.5 9.5 H0.5 Z M8 23.5 L15.5 14.5 H0.5 Z" fill="#bfbfbf"/></svg></div>
<div class="a c th" style="left:1338px;top:635px;width:312px"><span class="k">表描述</span></div>
<div class="a c th" style="left:1648px;top:635px;width:126px"><span class="k">版本</span></div>
<div class="a c th" style="left:1772px;top:635px;width:260px"><span class="k">同步状态</span><svg class="so" width="16" height="24" viewBox="0 0 16 24"><path d="M8 0.5 L15.5 9.5 H0.5 Z M8 23.5 L15.5 14.5 H0.5 Z" fill="#bfbfbf"/></svg></div>
<div class="a c th" style="left:2030px;top:635px;width:466px"><span class="k">创建时间</span><svg class="so" width="16" height="24" viewBox="0 0 16 24"><path d="M8 0.5 L15.5 9.5 H0.5 Z M8 23.5 L15.5 14.5 H0.5 Z" fill="#bfbfbf"/></svg></div>
<div class="a c th" style="left:2494px;top:635px;width:298px"><span class="k">操作</span></div>
<div class="a cb" style="left:518px;top:730px"></div>
<div class="a c num" style="left:592px;top:727px;width:122px">1</div>
<div class="a c" style="left:712px;top:727px;width:220px"><span class="k">单表</span></div>
<div class="a c" style="left:930px;top:727px;width:410px">test_1</div>
<div class="a c" style="left:1338px;top:727px;width:312px"><span class="k">测试表</span>1</div>
<div class="a c num" style="left:1648px;top:727px;width:126px">1</div>
<div class="a c" style="left:1772px;top:727px;width:260px;color:#cf1b1b"><span class="k">未同步</span></div>
<div class="a c dt" style="left:2030px;top:727px;width:466px">2020-11-03 15:22:10</div>
<div class="a lk" style="left:2554px;top:727px"><span class="k">编辑</span></div>
<div class="a dv" style="left:2626px;top:731px"></div>
<div class="a lk" style="left:2645px;top:727px"><span class="k">更多</span></div>
<svg class="a" style="left:2710px;top:741px" width="20" height="14" viewBox="0 0 20 14"><path d="M2 1.5 L10 11.5 L18 1.5" fill="none" stroke="#4a84e0" stroke-width="1.7"/></svg>
<div class="a cb hov" style="left:518px;top:822px"></div>
<div class="a c num" style="left:592px;top:819px;width:122px">2</div>
<div class="a c" style="left:712px;top:819px;width:220px"><span class="k">单表</span></div>
<div class="a c" style="left:930px;top:819px;width:410px">gz_config</div>
<div class="a c" style="left:1338px;top:819px;width:312px"><span class="k">系统配置表</span></div>
<div class="a c num" style="left:1648px;top:819px;width:126px">1</div>
<div class="a c" style="left:1772px;top:819px;width:260px;color:#6dc049"><span class="k">已同步</span></div>
<div class="a c dt" style="left:2030px;top:819px;width:466px">2020-11-03 11:18:40</div>
<div class="a lk" style="left:2554px;top:819px"><span class="k">编辑</span></div>
<div class="a dv" style="left:2626px;top:823px"></div>
<div class="a cb" style="left:518px;top:914px"></div>
<div class="a c num" style="left:592px;top:911px;width:122px">3</div>
<div class="a c" style="left:712px;top:911px;width:220px"><span class="k">单表</span></div>
<div class="a c" style="left:930px;top:911px;width:410px">ces_field_kongj</div>
<div class="a c" style="left:1338px;top:911px;width:312px">online<span class="k">表单控件</span></div>
<div class="a c num" style="left:1648px;top:911px;width:126px">14</div>
<div class="a c" style="left:1772px;top:911px;width:260px;color:#6dc049"><span class="k">已同步</span></div>
<div class="a c dt" style="left:2030px;top:911px;width:466px">2020-05-12 20:26:01</div>
<div class="a lk" style="left:2554px;top:911px"><span class="k">编辑</span></div>
<div class="a dv" style="left:2626px;top:915px"></div>
<div class="a cb" style="left:518px;top:1006px"></div>
<div class="a c num" style="left:592px;top:1003px;width:122px">4</div>
<div class="a c" style="left:712px;top:1003px;width:220px"><span class="k">附表</span></div>
<div class="a c" style="left:930px;top:1003px;width:410px">ces_order_customer</div>
<div class="a c" style="left:1338px;top:1003px;width:312px"><span class="k">订单客户</span></div>
<div class="a c num" style="left:1648px;top:1003px;width:126px">5</div>
<div class="a c" style="left:1772px;top:1003px;width:260px;color:#6dc049"><span class="k">已同步</span></div>
<div class="a c dt" style="left:2030px;top:1003px;width:466px">2020-05-08 23:51:49</div>
<div class="a lk" style="left:2554px;top:1003px"><span class="k">编辑</span></div>
<div class="a dv" style="left:2626px;top:1007px"></div>
<div class="a cb" style="left:518px;top:1098px"></div>
<div class="a c num" style="left:592px;top:1095px;width:122px">5</div>
<div class="a c" style="left:712px;top:1095px;width:220px"><span class="k">附表</span></div>
<div class="a c" style="left:930px;top:1095px;width:410px">ces_order_goods</div>
<div class="a c" style="left:1338px;top:1095px;width:312px"><span class="k">订单商品</span></div>
<div class="a c num" style="left:1648px;top:1095px;width:126px">2</div>
<div class="a c" style="left:1772px;top:1095px;width:260px;color:#6dc049"><span class="k">已同步</span></div>
<div class="a c dt" style="left:2030px;top:1095px;width:466px">2020-05-08 23:48:31</div>
<div class="a lk" style="left:2554px;top:1095px"><span class="k">编辑</span></div>
<div class="a dv" style="left:2626px;top:1099px"></div>
<div class="a cb" style="left:518px;top:1190px"></div>
<div class="a c num" style="left:592px;top:1187px;width:122px">6</div>
<div class="a c" style="left:712px;top:1187px;width:220px"><span class="k">主表</span></div>
<div class="a c" style="left:930px;top:1187px;width:410px">ces_order_main</div>
<div class="a c" style="left:1338px;top:1187px;width:312px"><span class="k">商城订单表</span></div>
<div class="a c num" style="left:1648px;top:1187px;width:126px">9</div>
<div class="a c" style="left:1772px;top:1187px;width:260px;color:#6dc049"><span class="k">已同步</span></div>
<div class="a c dt" style="left:2030px;top:1187px;width:466px">2020-05-08 23:45:32</div>
<div class="a lk" style="left:2554px;top:1187px"><span class="k">编辑</span></div>
<div class="a dv" style="left:2626px;top:1191px"></div>
<div class="a lk" style="left:2645px;top:1187px"><span class="k">更多</span></div>
<svg class="a" style="left:2710px;top:1201px" width="20" height="14" viewBox="0 0 20 14"><path d="M2 1.5 L10 11.5 L18 1.5" fill="none" stroke="#4a84e0" stroke-width="1.7"/></svg>
<div class="a cb" style="left:518px;top:1282px"></div>
<div class="a c num" style="left:592px;top:1279px;width:122px">7</div>
<div class="a c" style="left:712px;top:1279px;width:220px"><span class="k">单表</span></div>
<div class="a c" style="left:930px;top:1279px;width:410px">ces_shop_goods</div>
<div class="a c" style="left:1338px;top:1279px;width:312px"><span class="k">商品</span></div>
<div class="a c num" style="left:1648px;top:1279px;width:126px">7</div>
<div class="a c" style="left:1772px;top:1279px;width:260px;color:#6dc049"><span class="k">已同步</span></div>
<div class="a c dt" style="left:2030px;top:1279px;width:466px">2020-05-07 22:49:47</div>
<div class="a lk" style="left:2554px;top:1279px"><span class="k">编辑</span></div>
<div class="a dv" style="left:2626px;top:1283px"></div>
<div class="a lk" style="left:2645px;top:1279px"><span class="k">更多</span></div>
<svg class="a" style="left:2710px;top:1293px" width="20" height="14" viewBox="0 0 20 14"><path d="M2 1.5 L10 11.5 L18 1.5" fill="none" stroke="#4a84e0" stroke-width="1.7"/></svg>
<div class="a cb" style="left:518px;top:1374px"></div>
<div class="a c num" style="left:592px;top:1371px;width:122px">8</div>
<div class="a c" style="left:712px;top:1371px;width:220px"><span class="k">单表</span>(<span class="k">树</span>)</div>
<div class="a c" style="left:930px;top:1371px;width:410px">ces_shop_type</div>
<div class="a c" style="left:1338px;top:1371px;width:312px"><span class="k">商品分类</span></div>
<div class="a c num" style="left:1648px;top:1371px;width:126px">1</div>
<div class="a c" style="left:1772px;top:1371px;width:260px;color:#6dc049"><span class="k">已同步</span></div>
<div class="a c dt" style="left:2030px;top:1371px;width:466px">2020-05-07 22:46:31</div>
<div class="a lk" style="left:2554px;top:1371px"><span class="k">编辑</span></div>
<div class="a dv" style="left:2626px;top:1375px"></div>
<div class="a lk" style="left:2645px;top:1371px"><span class="k">更多</span></div>
<svg class="a" style="left:2710px;top:1385px" width="20" height="14" viewBox="0 0 20 14"><path d="M2 1.5 L10 11.5 L18 1.5" fill="none" stroke="#4a84e0" stroke-width="1.7"/></svg>
<div class="a cb" style="left:518px;top:1466px"></div>
<div class="a c num" style="left:592px;top:1463px;width:122px">9</div>
<div class="a c" style="left:712px;top:1463px;width:220px"><span class="k">单表</span></div>
<div class="a c" style="left:930px;top:1463px;width:410px">test_note</div>
<div class="a c" style="left:1338px;top:1463px;width:312px"><span class="k">测试请假单</span></div>
<div class="a c num" style="left:1648px;top:1463px;width:126px">10</div>
<div class="a c" style="left:1772px;top:1463px;width:260px;color:#6dc049"><span class="k">已同步</span></div>
<div class="a c dt" style="left:2030px;top:1463px;width:466px">2020-05-06 11:34:31</div>
<div class="a lk" style="left:2554px;top:1463px"><span class="k">编辑</span></div>
<div class="a dv" style="left:2626px;top:1467px"></div>
<div class="a lk" style="left:2645px;top:1463px"><span class="k">更多</span></div>
<svg class="a" style="left:2710px;top:1477px" width="20" height="14" viewBox="0 0 20 14"><path d="M2 1.5 L10 11.5 L18 1.5" fill="none" stroke="#4a84e0" stroke-width="1.7"/></svg>
<div class="a" style="left:2644px;top:770px;width:188px;height:400px;background:#fff;border-radius:8px;box-shadow:0 4px 12px rgba(0,0,0,.15)"></div>
<div class="a" style="left:2644px;top:778px;width:188px;height:64px;background:#e6f7ff"></div>
<div class="a" style="left:2669px;top:793px;line-height:36px"><span class="k">同步数据库</span></div>
<div class="a" style="left:2669px;top:857px;line-height:36px"><span class="k">权限控制</span></div>
<div class="a" style="left:2669px;top:921px;line-height:36px"><span class="k">角色授权</span></div>
<div class="a" style="left:2669px;top:985px;line-height:36px"><span class="k">生成视图</span></div>
<div class="a" style="left:2669px;top:1049px;line-height:36px"><span class="k">移除</span></div>
<div class="a" style="left:2669px;top:1113px;line-height:36px"><span class="k">删除</span></div>
<div class="a" style="left:2613px;top:769px;width:300px;height:71px;border:6px solid #d9441a;border-radius:12px"></div>
<div class="a" style="left:2094px;top:1392px;font-size:84px;line-height:100px;color:#afafaf;-webkit-text-stroke:5px #fff;paint-order:stroke fill"><span class="k">知乎</span><span style="margin-left:28px">@</span><span style="margin-left:3px"><span class="k">平凡人笔记</span></span></div>
</body></html>
